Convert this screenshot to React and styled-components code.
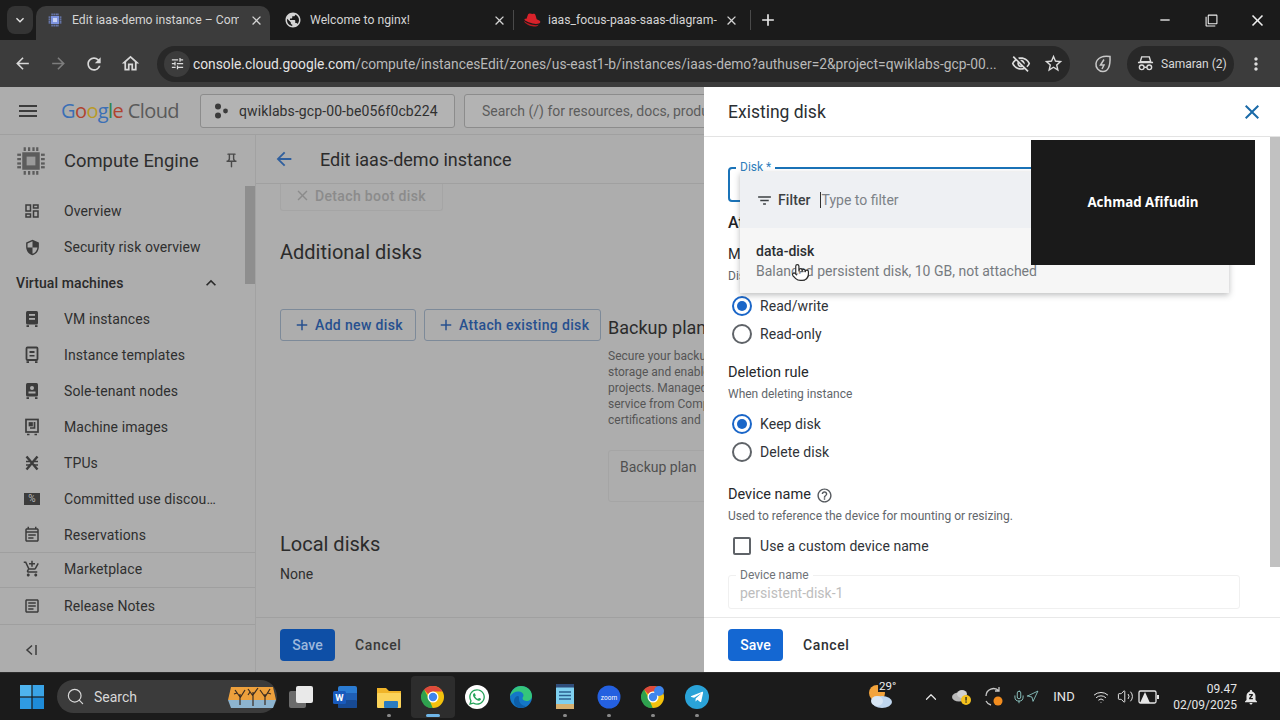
import React from "react";
import styled, { createGlobalStyle } from "styled-components";
import {
  MdMenu,
  MdArrowBack,
  MdArrowForward,
  MdClose,
  MdRefresh,
  MdOutlineHome,
  MdAdd,
  MdKeyboardArrowUp,
  MdKeyboardArrowDown,
  MdFilterList,
  MdHelpOutline,
  MdStarBorder,
  MdOutlineVisibilityOff,
  MdMoreVert,
  MdOutlinePushPin,
  MdOutlineDashboard,
  MdSecurity,
  MdAddShoppingCart,
  MdOutlineArticle,
  MdOutlineEventNote,
  MdNotificationsPaused,
  MdPublic,
  MdTune,
  MdRemove,
  MdOutlineFilterNone,
} from "react-icons/md";
import { FaWhatsapp, FaTelegramPlane } from "react-icons/fa";
import { Pointer, Search, Wifi, Volume2, Mic, Navigation, ChevronUp } from "lucide-react";

const GlobalStyle = createGlobalStyle`
  html, body {
    margin: 0;
    padding: 0;
    background: #1b1b1b;
  }
  * {
    box-sizing: border-box;
  }
`;

/* inline drawings */
const ChipIcon = ({ size = 16, color = "#7c93e0", core = "#c9d3f5" }) => (
  <svg width={size} height={size} viewBox="0 0 24 24" fill="none">
    <rect x="5" y="5" width="14" height="14" fill={color} />
    <rect x="8.5" y="8.5" width="7" height="7" fill={core} />
    {[7, 10.5, 14, 17].map((p) => (
      <g key={p} stroke={color} strokeWidth="1.8">
        <line x1={p} y1="1" x2={p} y2="4" />
        <line x1={p} y1="20" x2={p} y2="23" />
        <line x1="1" y1={p} x2="4" y2={p} />
        <line x1="20" y1={p} x2="23" y2={p} />
      </g>
    ))}
  </svg>
);

const ProjectDots = () => (
  <svg width="16" height="16" viewBox="0 0 16 16" fill="#3b3b3b">
    <circle cx="5" cy="3.5" r="3" />
    <circle cx="12.5" cy="8" r="2.4" />
    <circle cx="5" cy="12.5" r="3" />
  </svg>
);

const RedHat = () => (
  <svg width="18" height="16" viewBox="0 0 18 16">
    <path d="M5 2.5C6 1 8 1.6 9.5 2c1.4-.4 2.6-.2 3 1.2l1.2 4 3 1.6c1 .8.8 2.2-.8 2.8-2.4.9-6.4.4-9.4-1-2.6-1.2-5.5-2.2-5-3.4.3-.5 1.2-.5 2-.4z" fill="#d8222a" />
    <path d="M1 8.8c2.6 2.4 7.6 4.4 12 4.4 1 0 2-.2 2.6-.7-.6 1.6-2.4 2.2-4.6 2-3.6-.2-9.6-2.6-10-5.700z" fill="#b81c22" />
  </svg>
);

const VmGlyph = ({ variant }) => (
  <svg width="18" height="18" viewBox="0 0 18 18">
    {variant === "outline" ? (
      <>
        <rect x="3.500" y="1.500" width="11" height="12.500" rx="1" fill="none" stroke="#3c3c3c" strokeWidth="1.800" />
        <rect x="6.500" y="5" width="5" height="2" fill="#3c3c3c" />
        <rect x="6.500" y="9" width="5" height="1.500" fill="#3c3c3c" />
      </>
    ) : (
      <>
        <rect x="3" y="1" width="12" height="13.500" rx="1.500" fill="#3c3c3c" />
        <rect x="6" y="4" width="6" height="1.800" fill="#adadad" />
        <rect x="6" y="8" width="6" height="1.800" fill="#adadad" />
      </>
    )}
    <rect x="3.500" y="15.200" width="2.500" height="1.800" fill="#3c3c3c" />
    <rect x="12" y="15.200" width="2.500" height="1.800" fill="#3c3c3c" />
  </svg>
);

const SoleGlyph = () => (
  <svg width="18" height="18" viewBox="0 0 18 18">
    <rect x="3" y="1" width="12" height="13.500" rx="1.500" fill="#3c3c3c" />
    <circle cx="9" cy="6" r="2" fill="#adadad" />
    <rect x="5.500" y="9.500" width="7" height="2" fill="#adadad" />
    <rect x="3.500" y="15.200" width="2.500" height="1.800" fill="#3c3c3c" />
    <rect x="12" y="15.200" width="2.500" height="1.800" fill="#3c3c3c" />
  </svg>
);

const ImageGlyph = () => (
  <svg width="18" height="18" viewBox="0 0 18 18" fill="none" stroke="#3c3c3c" strokeWidth="1.700">
    <rect x="3" y="1.500" width="12" height="12.500" />
    <rect x="6.500" y="5" width="2.500" height="2.500" fill="#3c3c3c" />
    <path d="M11.500 4v6H7" />
    <path d="M4 16.500h2.500M11.500 16.500H14" />
  </svg>
);

const TpuGlyph = () => (
  <svg width="18" height="18" viewBox="0 0 18 18" fill="none" stroke="#3c3c3c" strokeWidth="2.400">
    <path d="M3.500 2.500 14.500 15.500M14.500 2.500 3.500 15.500" />
    <path d="M3 7.500h4M11 7.500h4M3 11h4M11 11h4" strokeWidth="1.500" />
  </svg>
);

const CollapseGlyph = () => (
  <svg width="14" height="12" viewBox="0 0 14 12" fill="none" stroke="#3c3c3c" strokeWidth="1.500">
    <path d="M7 1.500 2 6l5 4.500" />
    <path d="M11 1v10" />
  </svg>
);

const WindowsLogo = () => (
  <svg width="24" height="24" viewBox="0 0 24 24">
    <rect x="0" y="0" width="11.400" height="11.400" fill="#4fb4ee" />
    <rect x="12.600" y="0" width="11.400" height="11.400" fill="#39a3e6" />
    <rect x="0" y="12.600" width="11.400" height="11.400" fill="#2f9be3" />
    <rect x="12.600" y="12.600" width="11.400" height="11.400" fill="#1e8bd8" />
  </svg>
);

const SearchArt = () => (
  <svg width="50" height="26" viewBox="0 0 50 26">
    <path d="M4 3h42l3 13H1z" fill="#eda03c" />
    <path d="M1 16h48l-3 8H4z" fill="#8db4cf" />
    <g stroke="#3a2c22" strokeWidth="1.200" fill="none">
      <path d="M13 21V10M13 13 8 6M13 14l5-8M10 9l-3 1" />
      <path d="M26 22V8M26 12l-5-7M26 11l5-7M23 8l-2 3" />
      <path d="M38 21V10M38 13l-5-7M38 13l5-8M41 9l3 1" />
    </g>
  </svg>
);

const TaskViewGlyph = () => (
  <svg width="26" height="24" viewBox="0 0 26 24">
    <rect x="1" y="6" width="17" height="17" rx="2" fill="#6b6b6b" />
    <rect x="8" y="1" width="17" height="17" rx="2" fill="#e9e9e9" />
  </svg>
);

const WordGlyph = () => (
  <svg width="26" height="24" viewBox="0 0 26 24">
    <rect x="6" y="1" width="19" height="22" rx="2" fill="#2b7cd3" />
    <rect x="6" y="8" width="19" height="7" fill="#1f5fb5" />
    <rect x="6" y="15" width="19" height="8" rx="1" fill="#174a94" />
    <rect x="1" y="6" width="13" height="13" rx="1.500" fill="#185abd" />
    <text x="7.500" y="16" textAnchor="middle" fontSize="9.500" fontWeight="700" fill="#fff" fontFamily="Roboto, sans-serif">W</text>
  </svg>
);

const FolderGlyph = () => (
  <svg width="26" height="24" viewBox="0 0 26 24">
    <path d="M1 3h9l3 3h12v16H1z" fill="#f0b429" />
    <rect x="1" y="8" width="24" height="15" rx="1" fill="#fbd35a" />
    <rect x="8" y="16" width="14" height="7" rx="1" fill="#2a7bc0" />
  </svg>
);

const ChromeGlyph = ({ badge }) => (
  <svg width="24" height="24" viewBox="0 0 24 24">
    <circle cx="12" cy="12" r="11" fill="#f4c20d" />
    <path d="M12 1a11 11 0 0 1 9.500 5.500H12A5.500 5.500 0 0 0 7.200 9.300L3 4.500A11 11 0 0 1 12 1z" fill="#de4a3c" />
    <path d="M3 4.500l4.700 8.600 4 9.900A11 11 0 0 1 3 4.500z" fill="#2fa24f" />
    <circle cx="12" cy="12" r="5.500" fill="#fff" />
    <circle cx="12" cy="12" r="4.200" fill="#3f85ec" />
    {badge && <circle cx="18" cy="6" r="5" fill="#3f85ec" />}
  </svg>
);

const WhatsappGlyph = () => (
  <WaBadge>
    <FaWhatsapp size={18} color="#25a35a" />
  </WaBadge>
);

const EdgeGlyph = () => (
  <svg width="24" height="24" viewBox="0 0 24 24">
    <circle cx="12" cy="12" r="11" fill="#1477c7" />
    <path d="M12 1c6 0 11 4.300 11 10 0 3-2.500 5-5.500 5-2 0-4-1-4-2.800 0-1.200 1-1.400 1-3C14.500 8 12 6.400 9 6.400c-3 0-6 1.900-8 4.800C2 5.500 6.500 1 12 1z" fill="#35c57a" />
    <path d="M10 14c0 4 3 7 7 7-1.500 1-3.200 2-5 2-4 0-7-3-7-6.500C5 13 7 11 9.500 11c.5 1 .5 2 .5 3z" fill="#0d5ea8" />
  </svg>
);

const NotepadGlyph = () => (
  <svg width="22" height="26" viewBox="0 0 22 26">
    <rect x="2" y="2" width="18" height="23" rx="1.500" fill="#7fd0f0" />
    <rect x="2" y="20" width="18" height="5" fill="#d6b070" />
    <rect x="2" y="0" width="18" height="3.500" fill="#2f4d7a" />
    <path d="M5 8h12M5 11.500h12M5 15h12" stroke="#2b5f90" strokeWidth="1.400" />
  </svg>
);

const ZoomGlyph = () => (
  <svg width="24" height="24" viewBox="0 0 24 24">
    <circle cx="12" cy="12" r="11.500" fill="#2460e0" />
    <text x="12" y="14.500" textAnchor="middle" fontSize="6.500" fill="#fff" fontFamily="Roboto, sans-serif">zoom</text>
  </svg>
);

const TelegramGlyph = () => (
  <TgBadge>
    <FaTelegramPlane size={14} color="#fff" />
  </TgBadge>
);

const WeatherGlyph = () => (
  <svg width="26" height="24" viewBox="0 0 26 24">
    <circle cx="10" cy="8" r="8" fill="#f2a33c" />
    <ellipse cx="15" cy="17" rx="10" ry="6" fill="#bfd6ee" />
    <ellipse cx="10" cy="16" rx="6" ry="5" fill="#d8e6f4" />
  </svg>
);

const CloudWarnGlyph = () => (
  <svg width="22" height="18" viewBox="0 0 22 18">
    <ellipse cx="8" cy="9" rx="7" ry="4.500" fill="#b8b8b8" />
    <ellipse cx="11" cy="6" rx="5" ry="4" fill="#d0d0d0" />
    <circle cx="15" cy="12" r="5" fill="#f6c21c" />
    <rect x="14.400" y="9" width="1.300" height="3.600" fill="#222" />
    <rect x="14.400" y="13.400" width="1.300" height="1.300" fill="#222" />
  </svg>
);

const SyncGlyph = () => (
  <svg width="22" height="22" viewBox="0 0 22 22" fill="none">
    <path d="M3 10a7.500 7.500 0 0 1 13-5M16 1v4h-4M3 15a7.500 7.500 0 0 0 5 4" stroke="#c8c8c8" strokeWidth="1.300" />
    <circle cx="15" cy="15" r="4.500" fill="#f28c1e" />
  </svg>
);

const BatteryGlyph = () => (
  <svg width="22" height="16" viewBox="0 0 22 16" fill="none">
    <rect x="1" y="2" width="17" height="12" rx="1.500" stroke="#e6e6e6" strokeWidth="1.300" />
    <rect x="19" y="6" width="2" height="4" fill="#e6e6e6" />
    <path d="M7 3 2 14h10z" fill="#e6e6e6" />
  </svg>
);

const EnergyGlyph = () => (
  <svg width="20" height="20" viewBox="0 0 20 20" fill="none" stroke="#c8c8c8" strokeWidth="1.500">
    <path d="M17 2.500c-7-1-13 1-14 7-.5 4 2.500 8 7 8 5 0 7.500-5 7-15z" />
    <path d="M11 5.500 7.500 11H11l-2 4" />
  </svg>
);

/* browser chrome */
const Root = styled.div`
  width: 1280px;
  height: 720px;
  position: relative;
  overflow: hidden;
  display: flex;
  flex-direction: column;
  font-family: Roboto, "Liberation Sans", sans-serif;
`;

const TabStrip = styled.div`
  height: 40px;
  flex: none;
  background: #1b1b1b;
  display: flex;
  align-items: flex-end;
  padding-left: 7px;
`;

const TabMenu = styled.div`
  width: 26px;
  height: 28px;
  margin: 0 3px 6px 0;
  border-radius: 8px;
  background: #343434;
  color: #e4e4e4;
  display: flex;
  align-items: center;
  justify-content: center;
`;

const Tab = styled.div`
  width: ${(p) => p.$width}px;
  height: 34px;
  flex: none;
  padding: 0 ${(p) => p.$right || 6}px 6px ${(p) => p.$pad}px;
  border-radius: 10px 10px 0 0;
  background: ${(p) => (p.$active ? "#3c3c3c" : "transparent")};
  color: #d4d4d4;
  font-size: 12.2px;
  display: flex;
  align-items: center;
  gap: ${(p) => p.$gap}px;
`;

const TabTitle = styled.span`
  flex: 1;
  white-space: nowrap;
  overflow: hidden;
`;

const TabSep = styled.div`
  width: 1px;
  height: 20px;
  margin-bottom: 10px;
  flex: none;
  background: #4a4a4a;
`;

const NewTab = styled.div`
  width: 34px;
  height: 34px;
  flex: none;
  padding-bottom: 6px;
  color: #e8e8e8;
  display: flex;
  align-items: center;
  justify-content: center;
`;

const WindowControls = styled.div`
  margin-left: auto;
  height: 40px;
  display: flex;
  align-items: center;
  color: #eeeeee;
`;

const WindowBtn = styled.div`
  width: 46px;
  display: flex;
  justify-content: center;
`;

const Toolbar = styled.div`
  height: 47px;
  flex: none;
  background: #3c3c3c;
  color: #d2d2d2;
  display: flex;
  align-items: center;
  padding-left: 4px;
`;

const NavBtn = styled.div`
  width: 36px;
  display: flex;
  justify-content: center;
  color: ${(p) => (p.$off ? "#7d7d7d" : "#d8d8d8")};
`;

const Omnibox = styled.div`
  width: 913px;
  height: 36px;
  margin-left: 9px;
  padding: 0 1px 0 7px;
  border-radius: 18px;
  background: #282828;
  display: flex;
  align-items: center;
`;

const SiteInfo = styled.div`
  width: 26px;
  height: 26px;
  margin-right: 3px;
  border-radius: 50%;
  background: #3c3c3c;
  color: #dddddd;
  display: flex;
  align-items: center;
  justify-content: center;
`;

const Url = styled.div`
  flex: 1;
  font-size: 13.8px;
  color: #e3e3e3;
  white-space: nowrap;
  overflow: hidden;
`;

const UrlMuted = styled.span`
  color: #b9b9b9;
`;

const OmniAction = styled.div`
  width: 32px;
  display: flex;
  justify-content: center;
  color: #dcdcdc;
`;

const Energy = styled.div`
  width: 20px;
  margin: 0 14px 0 23px;
  display: flex;
`;

const Profile = styled.div`
  width: 107px;
  height: 36px;
  padding-left: 10px;
  border-radius: 18px;
  background: #282828;
  font-size: 12px;
  color: #d8d8d8;
  white-space: nowrap;
  display: flex;
  align-items: center;
  gap: 7px;
`;

const IncognitoIcon = styled.svg`
  width: 17px;
  height: 17px;
  flex: none;
`;

const More = styled.div`
  width: 44px;
  display: flex;
  justify-content: center;
  color: #dddddd;
`;

/* dimmed console */
const Page = styled.div`
  height: 585px;
  flex: none;
  display: flex;
`;

const Console = styled.div`
  width: 704px;
  flex: none;
  background: #adadad;
  display: flex;
  flex-direction: column;
  overflow: hidden;
`;

const AppBar = styled.div`
  height: 48px;
  flex: none;
  border-bottom: 1px solid #a0a0a0;
  display: flex;
  align-items: center;
  padding-left: 16px;
  color: #3c3c3c;
`;

const Hamburger = styled(MdMenu)`
  flex: none;
`;

const Logo = styled.div`
  width: 116px;
  flex: none;
  margin-left: 21px;
  font-family: "Open Sans", Roboto, sans-serif;
  font-size: 20px;
  letter-spacing: -0.6px;
  color: #5a5a5a;
  white-space: nowrap;
`;

const LogoLetter = styled.span`
  color: ${(p) => p.$c};
`;

const ProjectPicker = styled.div`
  width: 255px;
  height: 34px;
  margin-left: 23px;
  flex: none;
  padding-left: 12px;
  border: 1px solid #8c8c8c;
  border-radius: 3px;
  background: #b3b3b3;
  font-size: 14px;
  letter-spacing: 0.1px;
  color: #303030;
  display: flex;
  align-items: center;
  gap: 10px;
`;

const SearchBox = styled.div`
  width: 300px;
  height: 34px;
  margin-left: 9px;
  flex: none;
  padding-left: 17px;
  border: 1px solid #8c8c8c;
  border-radius: 3px;
  background: #b3b3b3;
  font-size: 14px;
  color: #5c5c5c;
  display: flex;
  align-items: center;
  white-space: nowrap;
  overflow: hidden;
`;

const Workspace = styled.div`
  flex: 1;
  min-height: 0;
  display: flex;
`;

const Sidebar = styled.div`
  width: 256px;
  flex: none;
  border-right: 1px solid #a2a2a2;
  display: flex;
  flex-direction: column;
`;

const SideHead = styled.div`
  height: 51px;
  flex: none;
  padding-left: 16px;
  display: flex;
  align-items: center;
  font-size: 18px;
  color: #2e2e2e;
`;

const SideTitle = styled.div`
  width: 159px;
  margin-left: 18px;
  font-size: 18.4px;
`;

const SideScroll = styled.div`
  height: 366px;
  flex: none;
  display: flex;
  overflow: hidden;
`;

const NavList = styled.div`
  flex: 1;
  padding-top: 7px;
`;

const NavTrack = styled.div`
  width: 10px;
  flex: none;
`;

const NavThumb = styled.div`
  height: 98px;
  background: #8e8e8e;
`;

const NavRow = styled.div`
  height: ${(p) => p.$h || 36}px;
  padding-left: 22px;
  padding-bottom: ${(p) => p.$lift || 0}px;
  display: flex;
  align-items: center;
  font-size: 14px;
  color: #2f2f2f;
  letter-spacing: 0.1px;
  white-space: nowrap;
  border-top: ${(p) => (p.$line ? "1px solid #9f9f9f" : "none")};
`;

const NavIcon = styled.div`
  width: 20px;
  height: 20px;
  margin-right: 22px;
  flex: none;
  color: #3c3c3c;
  display: flex;
  align-items: center;
  justify-content: center;
`;

const PercentBadge = styled.div`
  width: 16px;
  height: 12px;
  flex: none;
  background: #3c3c3c;
  color: #b8b8b8;
  font-size: 10px;
  line-height: 12px;
  text-align: center;
`;

const GroupRow = styled.div`
  height: 36px;
  padding: 0 24px 0 16px;
  display: flex;
  align-items: center;
  justify-content: space-between;
  font-size: 14px;
  font-weight: 500;
  color: #2a2a2a;
  letter-spacing: 0.1px;
`;

const Collapse = styled.div`
  flex: 1;
  padding: 2px 0 0 25px;
  display: flex;
  align-items: center;
  border-top: 1px solid #9f9f9f;
`;

const Main = styled.div`
  flex: 1;
  min-width: 0;
  display: flex;
  flex-direction: column;
`;

const TitleBar = styled.div`
  height: 49px;
  flex: none;
  padding-left: 17px;
  border-bottom: 1px solid #a0a0a0;
  display: flex;
  align-items: center;
  font-size: 18px;
  color: #2b2b2b;
`;

const BackLink = styled.div`
  width: 47px;
  flex: none;
  display: flex;
  color: #2f5f9e;
`;

const Content = styled.div`
  flex: 1;
  min-height: 0;
  padding-left: 24px;
  overflow: hidden;
`;

const DetachBtn = styled.div`
  width: 163px;
  height: 27px;
  padding: 0 0 3px 13px;
  border: 1px solid #a5a5a5;
  border-top: none;
  border-radius: 0 0 3px 3px;
  display: flex;
  align-items: center;
  gap: 4px;
  font-size: 14px;
  font-weight: 500;
  letter-spacing: 0.35px;
  color: #8b8b8b;
`;

const SectionTitle = styled.div`
  margin-top: ${(p) => p.$top}px;
  font-size: 20px;
  line-height: 28px;
  color: #2b2b2b;
`;

const ActionRow = styled.div`
  margin-top: 43px;
  display: flex;
`;

const OutlineBtn = styled.div`
  width: ${(p) => p.$width}px;
  height: 32px;
  flex: none;
  padding-left: 12px;
  border: 1px solid #7d8a99;
  border-radius: 3px;
  display: flex;
  align-items: center;
  gap: 4px;
  font-size: 14px;
  font-weight: 500;
  color: #27508f;
  letter-spacing: 0.35px;
  & + & {
    margin-left: 8px;
  }
`;

const BackupCol = styled.div`
  flex: none;
  width: 300px;
  margin-left: 7px;
  padding-top: 7px;
`;

const BackupTitle = styled.div`
  font-size: 18px;
  line-height: 24px;
  color: #2b2b2b;
`;

const BackupText = styled.div`
  margin-top: 8px;
  font-size: 12px;
  line-height: 16px;
  color: #555555;
  white-space: nowrap;
`;

const BackupField = styled.div`
  width: 300px;
  height: 52px;
  margin-top: 22px;
  padding: 8px 11px;
  border: 1px solid #a5a5a5;
  border-radius: 3px;
  font-size: 14px;
  color: #505050;
`;

const Plain = styled.div`
  margin-top: 6px;
  font-size: 14px;
  line-height: 20px;
  color: #2f2f2f;
`;

const Footer = styled.div`
  height: 55px;
  flex: none;
  padding-left: ${(p) => p.$pad}px;
  border-top: 1px solid ${(p) => p.$line};
  display: flex;
  align-items: center;
  gap: 20px;
`;

const PrimaryBtn = styled.div`
  width: 55px;
  height: 32px;
  border-radius: 4px;
  background: ${(p) => p.$bg};
  color: ${(p) => p.$fg};
  font-size: 14px;
  font-weight: 500;
  display: flex;
  align-items: center;
  justify-content: center;
`;

const TextBtn = styled.div`
  font-size: 14px;
  font-weight: 500;
  color: ${(p) => p.$fg};
  letter-spacing: 0.6px;
`;

/* side panel */
const Drawer = styled.div`
  width: 576px;
  flex: none;
  background: #ffffff;
  display: flex;
  flex-direction: column;
`;

const DrawerHead = styled.div`
  height: 50px;
  flex: none;
  padding: 0 16px 0 24px;
  border-bottom: 1px solid #e3e3e3;
  display: flex;
  align-items: center;
  justify-content: space-between;
  font-size: 17.5px;
  color: #2b2f33;
`;

const CloseBtn = styled.div`
  display: flex;
  color: #1a6aa8;
`;

const DrawerBody = styled.div`
  flex: 1;
  min-height: 0;
  display: flex;
`;

const Form = styled.div`
  flex: 1;
  min-width: 0;
  padding: 30px 30px 0 24px;
`;

const Track = styled.div`
  width: 10px;
  flex: none;
`;

const Thumb = styled.div`
  height: 430px;
  background: #c1c1c1;
`;

const DiskField = styled.div`
  position: relative;
  height: 35px;
  border: 2px solid #1a73b8;
  border-radius: 4px;
`;

const FloatLabel = styled.label`
  position: absolute;
  left: ${(p) => p.$left}px;
  top: ${(p) => p.$top}px;
  padding: 0 4px;
  background: #ffffff;
  font-size: 12px;
  line-height: 14px;
  color: ${(p) => p.$c};
`;

const Dropdown = styled.div`
  position: absolute;
  left: 10px;
  top: 3px;
  width: 489px;
  height: 121px;
  z-index: 2;
  box-shadow: 0 2px 6px rgba(60, 64, 67, 0.35);
`;

const FilterBar = styled.div`
  height: 56px;
  padding: 0 0 0 16px;
  background: #eef0f3;
  display: flex;
  align-items: center;
  font-size: 14px;
  color: #3c4043;
`;

const FilterLabel = styled.span`
  margin-left: 5px;
  font-weight: 500;
  letter-spacing: 0.1px;
`;

const Placeholder = styled.span`
  margin-left: 9px;
  padding-left: 1px;
  border-left: 1.500px solid #303030;
  color: #7d8287;
`;

const Option = styled.div`
  height: 65px;
  padding: 13px 16px 0;
  background: #f6f6f6;
`;

const OptionName = styled.div`
  font-size: 14px;
  line-height: 20px;
  font-weight: 500;
  color: #2c2f33;
`;

const OptionMeta = styled.div`
  font-size: 14px;
  line-height: 20px;
  color: #777b80;
`;

const HandCursor = styled.div`
  position: absolute;
  left: 51px;
  top: 91px;
  display: flex;
`;

const Heading = styled.div`
  margin-top: ${(p) => p.$top}px;
  font-size: 16px;
  line-height: 24px;
  font-weight: 500;
  color: #202124;
`;

const FieldLabel = styled.div`
  margin-top: ${(p) => p.$top}px;
  display: flex;
  align-items: center;
  gap: 5px;
  font-size: 14.500px;
  line-height: 20px;
  color: #26282b;
`;

const Hint = styled.div`
  margin-top: ${(p) => p.$top}px;
  font-size: 12px;
  line-height: 16px;
  color: #62666b;
`;

const Choice = styled.div`
  height: 28px;
  padding-left: 4px;
  display: flex;
  align-items: center;
  gap: 8px;
  font-size: 14px;
  color: #303338;
  letter-spacing: 0.05px;
  margin-top: ${(p) => p.$top || 0}px;
`;

const Radio = styled.span`
  width: 20px;
  height: 20px;
  flex: none;
  border-radius: 50%;
  border: 2px solid ${(p) => (p.$on ? "#1a66c8" : "#5f6368")};
  display: flex;
  align-items: center;
  justify-content: center;
  &::after {
    content: "";
    width: 10px;
    height: 10px;
    border-radius: 50%;
    background: ${(p) => (p.$on ? "#1a66c8" : "transparent")};
  }
`;

const Checkbox = styled.span`
  width: 18px;
  height: 18px;
  margin: 0 1px;
  flex: none;
  border: 2px solid #5f6368;
  border-radius: 2px;
`;

const NameField = styled.div`
  position: relative;
  height: 34px;
  margin-top: 15px;
  padding: 9px 11px 0;
  border: 1px solid #f0f0f0;
  border-radius: 3px;
  font-size: 14px;
  line-height: 16px;
  color: #bdbdbd;
`;

const PresenterTile = styled.div`
  position: absolute;
  left: 1031px;
  top: 140px;
  width: 224px;
  height: 125px;
  z-index: 5;
  padding-bottom: 1px;
  background: #1a1a1a;
  color: #ffffff;
  font-family: "Open Sans", Roboto, sans-serif;
  font-size: 13.3px;
  font-weight: 700;
  display: flex;
  align-items: center;
  justify-content: center;
`;

/* windows taskbar */
const Taskbar = styled.div`
  flex: 1;
  background: #1b1b1b;
  border-top: 1px solid #2c2c2c;
  display: flex;
  align-items: center;
  padding-left: 20px;
`;

const TaskSearch = styled.div`
  width: 220px;
  height: 33px;
  margin: 0 2px 0 13px;
  flex: none;
  padding: 0 0 0 9px;
  border-radius: 17px;
  background: #3b3b3b;
  color: #d8d8d8;
  font-size: 14px;
  display: flex;
  align-items: center;
  gap: 9px;
`;

const TaskSearchText = styled.span`
  flex: 1;
`;

const TaskItem = styled.div`
  position: relative;
  width: 44px;
  height: 42px;
  flex: none;
  border-radius: 4px;
  background: ${(p) => (p.$active ? "#2d2d2d" : "transparent")};
  display: flex;
  align-items: center;
  justify-content: center;
  &::after {
    content: "";
    display: ${(p) => (p.$dot ? "block" : "none")};
    position: absolute;
    left: 50%;
    bottom: 1px;
    width: ${(p) => (p.$active ? 14 : 4)}px;
    height: 3px;
    margin-left: ${(p) => (p.$active ? -7 : -2)}px;
    border-radius: 2px;
    background: ${(p) => (p.$active ? "#6fb6e8" : "#8a8a8a")};
  }
`;

const WaBadge = styled.div`
  width: 24px;
  height: 24px;
  border-radius: 50%;
  background: #ffffff;
  display: flex;
  align-items: center;
  justify-content: center;
`;

const TgBadge = styled.div`
  width: 24px;
  height: 24px;
  padding-right: 1px;
  border-radius: 50%;
  background: #2aa3d8;
  display: flex;
  align-items: center;
  justify-content: center;
`;

const Tray = styled.div`
  margin-left: auto;
  padding-right: 16px;
  display: flex;
  align-items: center;
  color: #e6e6e6;
`;

const TrayCell = styled.div`
  position: relative;
  width: ${(p) => p.$w}px;
  margin-right: ${(p) => p.$mr || 0}px;
  flex: none;
  display: flex;
  align-items: center;
  justify-content: center;
  font-size: 13px;
  color: ${(p) => p.$c || "#e6e6e6"};
`;

const Temp = styled.span`
  position: absolute;
  left: 14px;
  top: -5px;
  padding: 0 1px;
  background: #1b1b1b;
  font-size: 11.5px;
  line-height: 12px;
  color: #eeeeee;
`;

const Clock = styled.div`
  width: 76px;
  flex: none;
  text-align: right;
  font-size: 12px;
  line-height: 16px;
  color: #e6e6e6;
`;

const navTop = [
  { label: "VM instances", icon: <VmGlyph /> },
  { label: "Instance templates", icon: <VmGlyph variant="outline" /> },
  { label: "Sole-tenant nodes", icon: <SoleGlyph /> },
  { label: "Machine images", icon: <ImageGlyph /> },
  { label: "TPUs", icon: <TpuGlyph /> },
  { label: "Committed use discou…", icon: <PercentBadge>%</PercentBadge> },
  { label: "Reservations", icon: <MdOutlineEventNote size={18} /> },
];

const taskApps = [
  { id: "view", el: <TaskViewGlyph /> },
  { id: "word", el: <WordGlyph /> },
  { id: "folder", el: <FolderGlyph />, dot: true },
  { id: "chrome", el: <ChromeGlyph />, dot: true, active: true },
  { id: "wa", el: <WhatsappGlyph /> },
  { id: "edge", el: <EdgeGlyph /> },
  { id: "notes", el: <NotepadGlyph />, dot: true },
  { id: "zoom", el: <ZoomGlyph />, dot: true },
  { id: "canary", el: <ChromeGlyph badge />, dot: true },
  { id: "tg", el: <TelegramGlyph />, dot: true },
];

const App = () => {
  return (
    <Root>
      <GlobalStyle />
      <TabStrip>
        <TabMenu>
          <MdKeyboardArrowDown size={16} />
        </TabMenu>
        <Tab $active $width={234} $pad={12} $gap={10}>
          <ChipIcon size={14} />
          <TabTitle>Edit iaas-demo instance – Comp</TabTitle>
          <MdClose size={15} />
        </Tab>
        <Tab $width={243} $pad={14} $gap={8}>
          <MdPublic size={18} />
          <TabTitle>Welcome to nginx!</TabTitle>
          <MdClose size={15} />
        </Tab>
        <TabSep />
        <Tab $width={236} $pad={9} $gap={7} $right={11}>
          <RedHat />
          <TabTitle>iaas_focus-paas-saas-diagram-</TabTitle>
          <MdClose size={15} />
        </Tab>
        <TabSep />
        <NewTab>
          <MdAdd size={20} />
        </NewTab>
        <WindowControls>
          <WindowBtn>
            <MdRemove size={16} />
          </WindowBtn>
          <WindowBtn>
            <MdOutlineFilterNone size={13} />
          </WindowBtn>
          <WindowBtn>
            <MdClose size={19} />
          </WindowBtn>
        </WindowControls>
      </TabStrip>

      <Toolbar>
        <NavBtn>
          <MdArrowBack size={19} />
        </NavBtn>
        <NavBtn $off>
          <MdArrowForward size={19} />
        </NavBtn>
        <NavBtn>
          <MdRefresh size={20} />
        </NavBtn>
        <NavBtn>
          <MdOutlineHome size={21} />
        </NavBtn>
        <Omnibox>
          <SiteInfo>
            <MdTune size={15} />
          </SiteInfo>
          <Url>
            console.cloud.google.com
            <UrlMuted>/compute/instancesEdit/zones/us-east1-b/instances/iaas-demo?authuser=2&amp;project=qwiklabs-gcp-00...</UrlMuted>
          </Url>
          <OmniAction>
            <MdOutlineVisibilityOff size={20} />
          </OmniAction>
          <OmniAction>
            <MdStarBorder size={21} />
          </OmniAction>
        </Omnibox>
        <Energy>
          <EnergyGlyph />
        </Energy>
        <Profile>
          <IncognitoIcon viewBox="0 0 18 18" fill="none" stroke="#dcdcdc" strokeWidth="1.500">
            <path d="M5 2h8l1.500 5h-11zM1 8h16" />
            <circle cx="5" cy="13" r="2.500" />
            <circle cx="13" cy="13" r="2.500" />
            <path d="M7.500 13h3" />
          </IncognitoIcon>
          Samaran (2)
        </Profile>
        <More>
          <MdMoreVert size={20} />
        </More>
      </Toolbar>

      <Page>
        <Console>
          <AppBar>
            <Hamburger size={24} />
            <Logo>
              <LogoLetter $c="#3b6fb5">G</LogoLetter>
              <LogoLetter $c="#b0432f">o</LogoLetter>
              <LogoLetter $c="#b99a26">o</LogoLetter>
              <LogoLetter $c="#3b6fb5">g</LogoLetter>
              <LogoLetter $c="#2f8548">l</LogoLetter>
              <LogoLetter $c="#b0432f">e</LogoLetter> Cloud
            </Logo>
            <ProjectPicker>
              <ProjectDots />
              qwiklabs-gcp-00-be056f0cb224
            </ProjectPicker>
            <SearchBox>Search (/) for resources, docs, products, and more</SearchBox>
          </AppBar>
          <Workspace>
            <Sidebar>
              <SideHead>
                <ChipIcon size={30} color="#5c5c5c" core="#9a9a9a" />
                <SideTitle>Compute Engine</SideTitle>
                <MdOutlinePushPin size={17} color="#4a4a4a" />
              </SideHead>
              <SideScroll>
                <NavList>
                  <NavRow>
                    <NavIcon>
                      <MdOutlineDashboard size={18} />
                    </NavIcon>
                    Overview
                  </NavRow>
                  <NavRow>
                    <NavIcon>
                      <MdSecurity size={17} />
                    </NavIcon>
                    Security risk overview
                  </NavRow>
                  <GroupRow>
                    Virtual machines
                    <MdKeyboardArrowUp size={20} />
                  </GroupRow>
                  {navTop.map((item) => (
                    <NavRow key={item.label}>
                      <NavIcon>{item.icon}</NavIcon>
                      {item.label}
                    </NavRow>
                  ))}
                </NavList>
                <NavTrack>
                  <NavThumb />
                </NavTrack>
              </SideScroll>
              <NavRow $line $h={35} $lift={3}>
                <NavIcon>
                  <MdAddShoppingCart size={18} />
                </NavIcon>
                Marketplace
              </NavRow>
              <NavRow $line $h={37} $lift={1}>
                <NavIcon>
                  <MdOutlineArticle size={18} />
                </NavIcon>
                Release Notes
              </NavRow>
              <Collapse>
                <CollapseGlyph />
              </Collapse>
            </Sidebar>
            <Main>
              <TitleBar>
                <BackLink>
                  <MdArrowBack size={22} />
                </BackLink>
                Edit iaas-demo instance
              </TitleBar>
              <Content>
                <DetachBtn>
                  <MdClose size={17} />
                  Detach boot disk
                </DetachBtn>
                <SectionTitle $top={27}>Additional disks</SectionTitle>
                <ActionRow>
                  <OutlineBtn $width={136}>
                    <MdAdd size={18} />
                    Add new disk
                  </OutlineBtn>
                  <OutlineBtn $width={177}>
                    <MdAdd size={18} />
                    Attach existing disk
                  </OutlineBtn>
                  <BackupCol>
                    <BackupTitle>Backup plan</BackupTitle>
                    <BackupText>
                      Secure your backups in a vault with immutable
                      <br />
                      storage and enable backups across
                      <br />
                      projects. Managed by the backup and DR
                      <br />
                      service from Compute Engine with
                      <br />
                      certifications and compliance.
                    </BackupText>
                    <BackupField>Backup plan</BackupField>
                  </BackupCol>
                </ActionRow>
                <SectionTitle $top={28}>Local disks</SectionTitle>
                <Plain>None</Plain>
              </Content>
              <Footer $pad={24} $line="#a0a0a0">
                <PrimaryBtn $bg="#0e4fa6" $fg="#9cb8dc">
                  Save
                </PrimaryBtn>
                <TextBtn $fg="#3a3a3a">Cancel</TextBtn>
              </Footer>
            </Main>
          </Workspace>
        </Console>

        <Drawer>
          <DrawerHead>
            Existing disk
            <CloseBtn>
              <MdClose size={24} />
            </CloseBtn>
          </DrawerHead>
          <DrawerBody>
            <Form>
              <DiskField>
                <FloatLabel $left={6} $top={-9} $c="#2f7ebc">
                  Disk *
                </FloatLabel>
                <Dropdown>
                  <FilterBar>
                    <MdFilterList size={17} />
                    <FilterLabel>Filter</FilterLabel>
                    <Placeholder>Type to filter</Placeholder>
                  </FilterBar>
                  <Option>
                    <OptionName>data-disk</OptionName>
                    <OptionMeta>Balanced persistent disk, 10 GB, not attached</OptionMeta>
                  </Option>
                  <HandCursor>
                    <Pointer size={19} color="#2b2b2b" fill="#ffffff" strokeWidth={1.5} />
                  </HandCursor>
                </Dropdown>
              </DiskField>
              <Heading $top={9}>Attachment settings</Heading>
              <FieldLabel $top={10}>Mode</FieldLabel>
              <Hint $top={3}>Disk mode</Hint>
              <Choice $top={8}>
                <Radio $on />
                Read/write
              </Choice>
              <Choice>
                <Radio />
                Read-only
              </Choice>
              <FieldLabel $top={15}>Deletion rule</FieldLabel>
              <Hint $top={3}>When deleting instance</Hint>
              <Choice $top={8}>
                <Radio $on />
                Keep disk
              </Choice>
              <Choice>
                <Radio />
                Delete disk
              </Choice>
              <FieldLabel $top={19}>
                Device name
                <MdHelpOutline size={17} color="#55595e" />
              </FieldLabel>
              <Hint $top={3}>Used to reference the device for mounting or resizing.</Hint>
              <Choice $top={8}>
                <Checkbox />
                Use a custom device name
              </Choice>
              <NameField>
                <FloatLabel $left={7} $top={-8} $c="#6f7378">
                  Device name
                </FloatLabel>
                persistent-disk-1
              </NameField>
            </Form>
            <Track>
              <Thumb />
            </Track>
          </DrawerBody>
          <Footer $pad={24} $line="#e8e8e8">
            <PrimaryBtn $bg="#1467d2" $fg="#ffffff">
              Save
            </PrimaryBtn>
            <TextBtn $fg="#2f3134">Cancel</TextBtn>
          </Footer>
        </Drawer>
      </Page>

      <Taskbar>
        <WindowsLogo />
        <TaskSearch>
          <Search size={19} strokeWidth={1.5} />
          <TaskSearchText>Search</TaskSearchText>
          <SearchArt />
        </TaskSearch>
        {taskApps.map((app) => (
          <TaskItem key={app.id} $dot={app.dot} $active={app.active}>
            {app.el}
          </TaskItem>
        ))}
        <Tray>
          <TrayCell $w={32} $mr={20}>
            <WeatherGlyph />
            <Temp>29°</Temp>
          </TrayCell>
          <TrayCell $w={30}>
            <ChevronUp size={18} strokeWidth={1.6} />
          </TrayCell>
          <TrayCell $w={32}>
            <CloudWarnGlyph />
          </TrayCell>
          <TrayCell $w={32}>
            <SyncGlyph />
          </TrayCell>
          <TrayCell $w={30} $c="#9fe0dc">
            <Mic size={14} strokeWidth={1.4} />
            <Navigation size={13} strokeWidth={1.4} />
          </TrayCell>
          <TrayCell $w={48}>IND</TrayCell>
          <TrayCell $w={26}>
            <Wifi size={16} strokeWidth={1.5} />
          </TrayCell>
          <TrayCell $w={23}>
            <Volume2 size={17} strokeWidth={1.4} />
          </TrayCell>
          <TrayCell $w={24}>
            <BatteryGlyph />
          </TrayCell>
          <Clock>
            09.47
            <br />
            02/09/2025
          </Clock>
          <TrayCell $w={27}>
            <MdNotificationsPaused size={18} />
          </TrayCell>
        </Tray>
      </Taskbar>

      <PresenterTile>Achmad Afifudin</PresenterTile>
    </Root>
  );
};

export default App;
